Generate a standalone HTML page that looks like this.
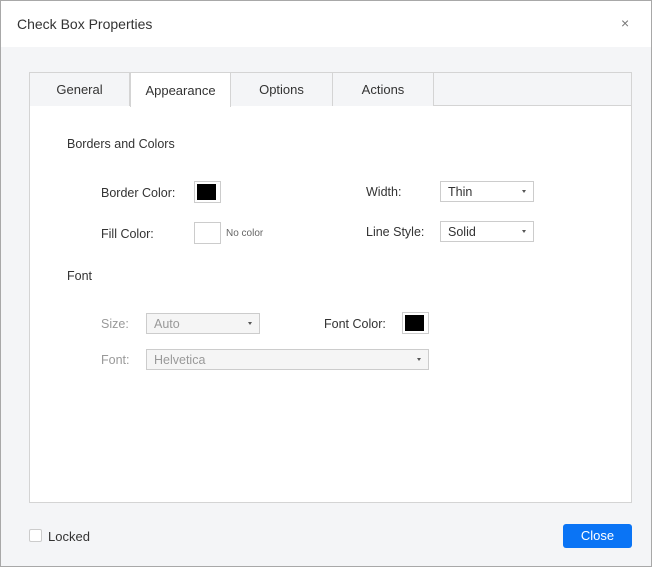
<!DOCTYPE html>
<html><head><style>
*{box-sizing:border-box;margin:0;padding:0}
body{width:652px;height:567px;font-family:"Liberation Sans",Arial,sans-serif;font-size:12.5px;color:#333;position:relative;overflow:hidden;background:#f4f5f7}
.a{position:absolute}
.frame{left:0;top:0;width:652px;height:567px;border:1px solid #a8a8a8}
.hdr{left:1px;top:1px;width:650px;height:46px;background:#fff}
.panel{left:29px;top:72px;width:603px;height:431px;border:1px solid #d4d4d4;background:#fff}
.tabbar{left:30px;top:73px;width:601px;height:33px;background:#f4f5f7;border-bottom:1px solid #d4d4d4}
.tab{top:73px;height:33px;border-right:1px solid #d4d4d4;text-align:center;line-height:33px;font-size:13px;background:#f4f5f7}
.sel{background:#fff;height:34px;line-height:36px}
.sw{width:27px;height:22px;border:1px solid #ccc;background:#fff}
.sw i{position:absolute;left:2px;top:2px;width:19px;height:16px;background:#000}
.dd{height:21px;border:1px solid #ccc;background:#fff;padding-left:7px;line-height:20px;font-size:12.5px}
.dd:after{content:"";position:absolute;right:7px;top:8px;border-left:2.5px solid transparent;border-right:2.5px solid transparent;border-top:3px solid #555}
.dis{background:#f5f5f5;color:#999}
.g{color:#999}
</style></head><body>
<div class="a frame"></div>
<div class="a hdr"></div>
<div class="a" style="left:17px;top:16px;font-size:14px">Check Box Properties</div>
<div class="a" style="left:621px;top:15px;font-size:14px;color:#777">×</div>
<div class="a panel"></div>
<div class="a tabbar"></div>
<div class="a tab" style="left:30px;width:100px">General</div>
<div class="a tab sel" style="left:130px;width:101px;border-left:1px solid #d4d4d4">Appearance</div>
<div class="a tab" style="left:231px;width:102px">Options</div>
<div class="a tab" style="left:333px;width:101px">Actions</div>
<div class="a" style="left:67px;top:137px">Borders and Colors</div>
<div class="a" style="left:101px;top:186px">Border Color:</div>
<div class="a sw" style="left:194px;top:181px"><i></i></div>
<div class="a" style="left:366px;top:185px">Width:</div>
<div class="a dd" style="left:440px;top:181px;width:94px">Thin</div>
<div class="a" style="left:101px;top:227px">Fill Color:</div>
<div class="a sw" style="left:194px;top:222px"></div>
<div class="a" style="left:226px;top:228px;font-size:10px;color:#666">No color</div>
<div class="a" style="left:366px;top:225px">Line Style:</div>
<div class="a dd" style="left:440px;top:221px;width:94px">Solid</div>
<div class="a" style="left:67px;top:269px">Font</div>
<div class="a g" style="left:101px;top:317px">Size:</div>
<div class="a dd dis" style="left:146px;top:313px;width:114px">Auto</div>
<div class="a" style="left:324px;top:317px">Font Color:</div>
<div class="a sw" style="left:402px;top:312px"><i></i></div>
<div class="a g" style="left:101px;top:353px">Font:</div>
<div class="a dd dis" style="left:146px;top:349px;width:283px">Helvetica</div>
<div class="a" style="left:29px;top:529px;width:13px;height:13px;border:1px solid #ccc;border-radius:2px;background:#fff"></div>
<div class="a" style="left:48px;top:529px;font-size:13px">Locked</div>
<div class="a" style="left:563px;top:524px;width:69px;height:24px;background:#0a74f5;border-radius:3px;color:#fff;text-align:center;line-height:24px;font-size:13px">Close</div>
</body></html>
